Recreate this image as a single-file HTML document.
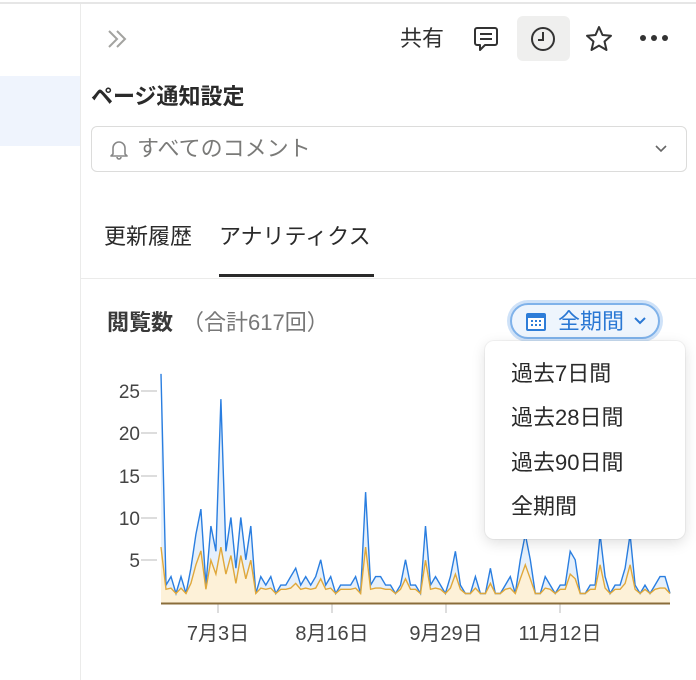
<!DOCTYPE html>
<html><head><meta charset="utf-8"><style>
*{margin:0;padding:0;box-sizing:border-box}
body{width:696px;height:680px;overflow:hidden;background:#fff;font-family:"Liberation Sans","Noto Sans CJK JP",sans-serif;color:#37352f;position:relative}
.a{position:absolute}
.t{position:absolute;line-height:22px;font-size:22px;white-space:nowrap}
</style></head><body>
<div class="a" style="left:0;top:2px;width:696px;height:2px;background:#e6e6e6"></div>
<div class="a" style="left:0;top:76px;width:80px;height:70px;background:#eff4fd"></div>
<div class="a" style="left:80px;top:4px;width:1px;height:676px;background:#ebebea"></div>
<svg class="a" style="left:106px;top:28px" width="26" height="22" viewBox="0 0 26 22"><path d="M3 3l8 8-8 8M11 3l8 8-8 8" fill="none" stroke="#a3a3a0" stroke-width="2"/></svg>
<div class="t" style="left:400px;top:28px;color:#2f2f2f">共有</div>
<svg class="a" style="left:471px;top:24px" width="30" height="30" viewBox="0 0 30 30"><path d="M6 4h18a2 2 0 0 1 2 2v13a2 2 0 0 1-2 2H14l-5 5v-5H6a2 2 0 0 1-2-2V6a2 2 0 0 1 2-2zM9 10h12M9 15h12" fill="none" stroke="#333" stroke-width="2" stroke-linejoin="round"/></svg>
<div class="a" style="left:517px;top:16px;width:53px;height:45px;background:#efefee;border-radius:6px"></div>
<svg class="a" style="left:529px;top:25px" width="28" height="28" viewBox="0 0 28 28"><circle cx="14" cy="14" r="11" fill="none" stroke="#333" stroke-width="2"/><path d="M14 7v8H9" fill="none" stroke="#333" stroke-width="2"/></svg>
<svg class="a" style="left:584px;top:24px" width="30" height="30" viewBox="0 0 30 30"><path d="M15 3l3.5 8 8.5.8-6.5 5.7 2 8.5L15 21.6 7.5 26l2-8.5L3 11.8l8.5-.8z" fill="none" stroke="#333" stroke-width="2" stroke-linejoin="round"/></svg>
<svg class="a" style="left:638px;top:33px" width="32" height="10"><circle cx="5" cy="5" r="3" fill="#333"/><circle cx="16" cy="5" r="3" fill="#333"/><circle cx="27" cy="5" r="3" fill="#333"/></svg>
<div class="t" style="left:91px;top:86px;font-weight:bold;color:#2a2a2a">ページ通知設定</div>
<div class="a" style="left:91px;top:126px;width:596px;height:46px;border:1px solid #dcdcdb;border-radius:6px"></div>
<svg class="a" style="left:109px;top:139px" width="20" height="22" viewBox="0 0 20 22"><path d="M4 15V9a6 6 0 0 1 12 0v6l2 2H2zM8 18a2 2 0 0 0 4 0" fill="none" stroke="#888" stroke-width="1.6" stroke-linejoin="round"/></svg>
<div class="t" style="left:137px;top:138px;color:#7a7a78">すべてのコメント</div>
<svg class="a" style="left:653px;top:143px" width="16" height="12"><path d="M3 3l5 5 5-5" fill="none" stroke="#666" stroke-width="1.6"/></svg>
<div class="t" style="left:104px;top:226px;color:#2a2a2a">更新履歴</div>
<div class="t" style="left:219px;top:226px;color:#2a2a2a">アナリティクス</div>
<div class="a" style="left:219px;top:274px;width:155px;height:3px;background:#2a2a2a"></div>
<div class="a" style="left:80px;top:278px;width:616px;height:1px;background:#ebebea"></div>
<div class="t" style="left:107px;top:312px;font-weight:bold;color:#3a3a3a">閲覧数</div>
<div class="t" style="left:182px;top:312px;color:#777">（合計617回）</div>
<div class="a" style="left:507px;top:300px;width:156px;height:42px;border-radius:21px;background:#cfe2f8"></div>
<div class="a" style="left:510px;top:303px;width:150px;height:36px;border-radius:18px;background:#eef5fd;border:2px solid #7fb2ea"></div>
<svg class="a" style="left:525px;top:312px" width="22" height="20" viewBox="0 0 22 20"><rect x="1" y="1" width="20" height="18" rx="2" fill="#2e7dd8"/><rect x="3" y="6" width="16" height="11" fill="#fff"/><g fill="#2e7dd8"><rect x="6" y="8" width="2" height="2"/><rect x="10" y="8" width="2" height="2"/><rect x="14" y="8" width="2" height="2"/><rect x="6" y="12" width="2" height="2"/><rect x="10" y="12" width="2" height="2"/><rect x="14" y="12" width="2" height="2"/></g></svg>
<div class="t" style="left:558px;top:311px;color:#2a78d4">全期間</div>
<svg class="a" style="left:632px;top:315px" width="16" height="12"><path d="M3 3l5 5 5-5" fill="none" stroke="#2a78d4" stroke-width="2"/></svg>

<svg class="a" style="left:0;top:0" width="696" height="680">
<g font-size="19" fill="#444" text-anchor="end" font-family="Liberation Sans,sans-serif">
<text x="140" y="398">25</text><text x="140" y="440">20</text><text x="140" y="483">15</text><text x="140" y="525">10</text><text x="140" y="567">5</text></g>
<g stroke="#bbb"><path d="M141 391h16M141 433h16M141 476h16M141 518h16M141 560h16M218 603v10M332 603v10M446 603v10M560 603v10"/></g>
<path id="bf" fill="#e6f0fb" stroke="none"/><path id="of" fill="#fdf1d8" stroke="none"/>
<polyline id="bl" fill="none" stroke="#2a7ee0" stroke-width="1.4"/>
<polyline id="ol" fill="none" stroke="#e0a83a" stroke-width="1.4"/>
<path d="M161 603.5h509" stroke="#8a6d3b" stroke-width="2"/>
<g font-size="20" fill="#444" text-anchor="middle" font-family="Liberation Sans,Noto Sans CJK JP,sans-serif">
<text x="218" y="640">7月3日</text><text x="332" y="640">8月16日</text><text x="446" y="640">9月29日</text><text x="560" y="640">11月12日</text></g>
</svg>
<script>
var v=[27,2,3,1,3,1,4,8,11,2,9,6,24,6,10,4,10,5,9,1,3,2,3,1,2,2,3,4,2,3,2,3,5,2,3,1,2,2,2,3,1,13,2,3,3,2,2,1,2,5,2,2,1,9,2,3,2,1,3,6,2,1,1,3,1,1,4,1,1,2,3,1,5,8,5,1,1,3,2,1,2,2,6,5,1,1,2,2,8,3,1,2,2,4,8,2,1,2,1,2,3,3,1];
var n=v.length,b=[],o=[];
for(var i=0;i<n;i++){var x=161+i*509/(n-1);var y=602-v[i]*8.45;var ov=Math.min(Math.max(v[i]*0.55,v[i]>1?1.5:v[i]),6.5);b.push(x.toFixed(1)+','+y.toFixed(1));o.push(x.toFixed(1)+','+(602-ov*8.45).toFixed(1));}
document.getElementById('bl').setAttribute('points',b.join(' '));
document.getElementById('ol').setAttribute('points',o.join(' '));
document.getElementById('bf').setAttribute('d','M161,603L'+b.join('L')+'L670,603Z');
document.getElementById('of').setAttribute('d','M161,603L'+o.join('L')+'L670,603Z');
</script>
<div class="a" style="left:485px;top:341px;width:200px;height:198px;background:#fff;border-radius:9px;box-shadow:0 4px 14px rgba(0,0,0,.13),0 0 0 1px rgba(0,0,0,.04)">
<div class="t" style="left:26px;top:22px;color:#2a2a2a">過去7日間</div>
<div class="t" style="left:26px;top:66px;color:#2a2a2a">過去28日間</div>
<div class="t" style="left:26px;top:111px;color:#2a2a2a">過去90日間</div>
<div class="t" style="left:26px;top:155px;color:#2a2a2a">全期間</div>
</div>
</body></html>
